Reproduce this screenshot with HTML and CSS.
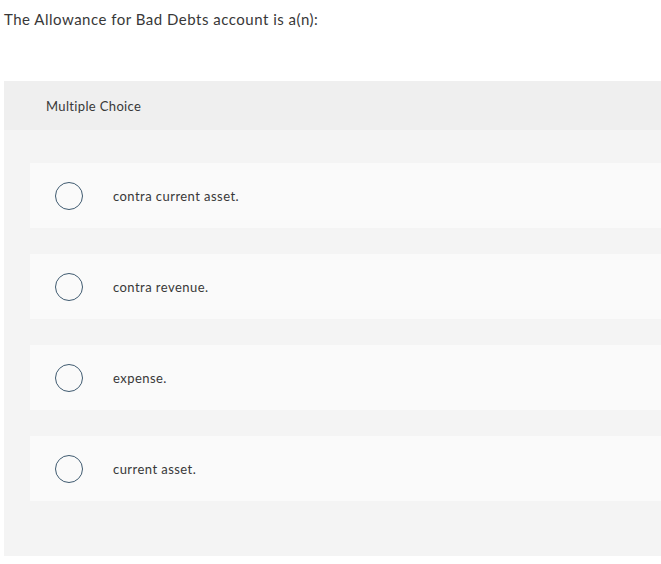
FILE: index.html
```html
<!DOCTYPE html>
<html lang="en">
<head>
    <meta charset="UTF-8">
    <meta name="viewport" content="width=device-width, initial-scale=1.0">
    <title>Multiple Choice</title>
    <link rel="stylesheet" href="styles.css">
</head>
<body>
    <p class="question">The Allowance for Bad Debts account is a(n):</p>

    <div class="panel">
        <div class="panel-head">Multiple Choice</div>
        <div class="choices">
            <label class="choice">
                <span class="radio"></span>
                <span class="choice-text">contra current asset.</span>
            </label>
            <label class="choice">
                <span class="radio"></span>
                <span class="choice-text">contra revenue.</span>
            </label>
            <label class="choice">
                <span class="radio"></span>
                <span class="choice-text">expense.</span>
            </label>
            <label class="choice">
                <span class="radio"></span>
                <span class="choice-text">current asset.</span>
            </label>
        </div>
    </div>
</body>
</html>
```

FILE: styles.css
```css
body {
    font-family: 'Lato', 'Open Sans', sans-serif;
    color: #383838;
    background: #fff;
    margin: 0;
    padding: 0;
}

.question {
    margin: 0;
    padding: 10px 4px 0;
    font-size: 15px;
    line-height: 18px;
    letter-spacing: 0.5px;
}

.panel {
    margin: 53px 0 0 4px;
    background: #f4f4f4;
    padding-bottom: 55px;
}

.panel-head {
    background: #efefef;
    height: 49px;
    line-height: 50px;
    padding-left: 42px;
    font-size: 13px;
    letter-spacing: 0.35px;
}

.choices {
    display: flex;
    flex-direction: column;
    gap: 26px;
    padding: 33px 0 0 26px;
}

.choice {
    display: flex;
    align-items: center;
    height: 65px;
    background: #fafafa;
    cursor: pointer;
}

.radio {
    width: 28px;
    height: 28px;
    border: 1.5px solid #3f5a70;
    border-radius: 50%;
    margin-left: 25px;
    box-sizing: border-box;
    flex-shrink: 0;
}

.choice-text {
    margin-left: 30px;
    font-size: 13px;
    letter-spacing: 0.45px;
}
```
